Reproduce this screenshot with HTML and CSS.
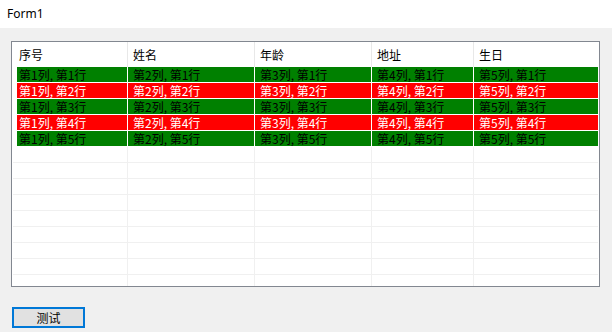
FILE: index.html
```html
<!DOCTYPE html>
<html lang="zh-CN">
<head>
  <meta charset="UTF-8" />
  <title>Form1</title>
  <link rel="stylesheet" href="styles.css">
</head>
<body>
  <div class="titlebar">Form1</div>
  <div class="form">
    <div class="listview">
      <div class="row header">
        <div class="cell">序号</div>
        <div class="cell">姓名</div>
        <div class="cell">年龄</div>
        <div class="cell">地址</div>
        <div class="cell">生日</div>
      </div>
      <div class="row green">
        <div class="cell"><span>第1列, 第1行</span></div>
        <div class="cell">第2列, 第1行</div>
        <div class="cell">第3列, 第1行</div>
        <div class="cell">第4列, 第1行</div>
        <div class="cell">第5列, 第1行</div>
      </div>
      <div class="row red">
        <div class="cell"><span>第1列, 第2行</span></div>
        <div class="cell">第2列, 第2行</div>
        <div class="cell">第3列, 第2行</div>
        <div class="cell">第4列, 第2行</div>
        <div class="cell">第5列, 第2行</div>
      </div>
      <div class="row green">
        <div class="cell"><span>第1列, 第3行</span></div>
        <div class="cell">第2列, 第3行</div>
        <div class="cell">第3列, 第3行</div>
        <div class="cell">第4列, 第3行</div>
        <div class="cell">第5列, 第3行</div>
      </div>
      <div class="row red">
        <div class="cell"><span>第1列, 第4行</span></div>
        <div class="cell">第2列, 第4行</div>
        <div class="cell">第3列, 第4行</div>
        <div class="cell">第4列, 第4行</div>
        <div class="cell">第5列, 第4行</div>
      </div>
      <div class="row green">
        <div class="cell"><span>第1列, 第5行</span></div>
        <div class="cell">第2列, 第5行</div>
        <div class="cell">第3列, 第5行</div>
        <div class="cell">第4列, 第5行</div>
        <div class="cell">第5列, 第5行</div>
      </div>
      <div class="row empty"><div class="cell"></div><div class="cell"></div><div class="cell"></div><div class="cell"></div><div class="cell"></div></div>
      <div class="row empty"><div class="cell"></div><div class="cell"></div><div class="cell"></div><div class="cell"></div><div class="cell"></div></div>
      <div class="row empty"><div class="cell"></div><div class="cell"></div><div class="cell"></div><div class="cell"></div><div class="cell"></div></div>
      <div class="row empty"><div class="cell"></div><div class="cell"></div><div class="cell"></div><div class="cell"></div><div class="cell"></div></div>
      <div class="row empty"><div class="cell"></div><div class="cell"></div><div class="cell"></div><div class="cell"></div><div class="cell"></div></div>
      <div class="row empty"><div class="cell"></div><div class="cell"></div><div class="cell"></div><div class="cell"></div><div class="cell"></div></div>
      <div class="row empty"><div class="cell"></div><div class="cell"></div><div class="cell"></div><div class="cell"></div><div class="cell"></div></div>
      <div class="row empty"><div class="cell"></div><div class="cell"></div><div class="cell"></div><div class="cell"></div><div class="cell"></div></div>
      <div class="row empty"><div class="cell"></div><div class="cell"></div><div class="cell"></div><div class="cell"></div><div class="cell"></div></div>
    </div>
    <button class="btn">测试</button>
  </div>
</body>
</html>
```

FILE: styles.css
```css
body {
  margin: 0;
  background: #f0f0f0;
  font-family: "Noto Sans CJK SC", "Noto Sans", sans-serif;
  font-size: 12px;
  color: #000;
}
.titlebar {
  height: 28px;
  line-height: 28px;
  background: #fff;
  padding-left: 7px;
  font-family: "Noto Sans", "Noto Sans CJK SC", sans-serif;
  font-size: 12px;
}
.form {
  padding: 13px 0 0 11px;
}
.listview {
  box-sizing: border-box;
  width: 589px;
  height: 246px;
  border: 1px solid #828790;
  background: #fff;
  overflow: hidden;
}
.row {
  display: grid;
  grid-template-columns: 114px 126px 116px 101px 124px;
  column-gap: 1px;
  margin: 0 1px;
  height: 15px;
  border-bottom: 1px solid #f0f0f0;
  background: #f0f0f0;
}
.row .cell {
  background: #fff;
  line-height: 15px;
  padding-left: 5px;
  white-space: nowrap;
  overflow: hidden;
}
.header {
  height: 25px;
  border-bottom: none;
  background: #e8e8e8;
}
.header .cell {
  line-height: 25px;
}
.header .cell:first-child {
  padding-left: 6px;
}
.row .cell:first-child {
  padding-left: 0;
}
.header .cell:first-child {
  padding-left: 6px;
}
.row .cell span {
  display: block;
  margin-left: 4px;
  padding-left: 2px;
  height: 15px;
}
.green .cell,
.green .cell span {
  background: #008000;
  color: #000;
}
.red .cell,
.red .cell span {
  background: #ff0000;
  color: #fff;
}
.green .cell:first-child,
.red .cell:first-child {
  background: #fff;
}
.green, .red {
  border-bottom-color: #fff;
  background: #fff;
}
.btn {
  display: block;
  box-sizing: border-box;
  margin-top: 20px;
  margin-left: 1px;
  width: 73px;
  height: 21px;
  padding: 0;
  border: 2px solid #0078d7;
  background: #e1e1e1;
  font-family: "Noto Sans CJK SC", sans-serif;
  font-size: 12px;
  line-height: 17px;
  color: #000;
}
```
